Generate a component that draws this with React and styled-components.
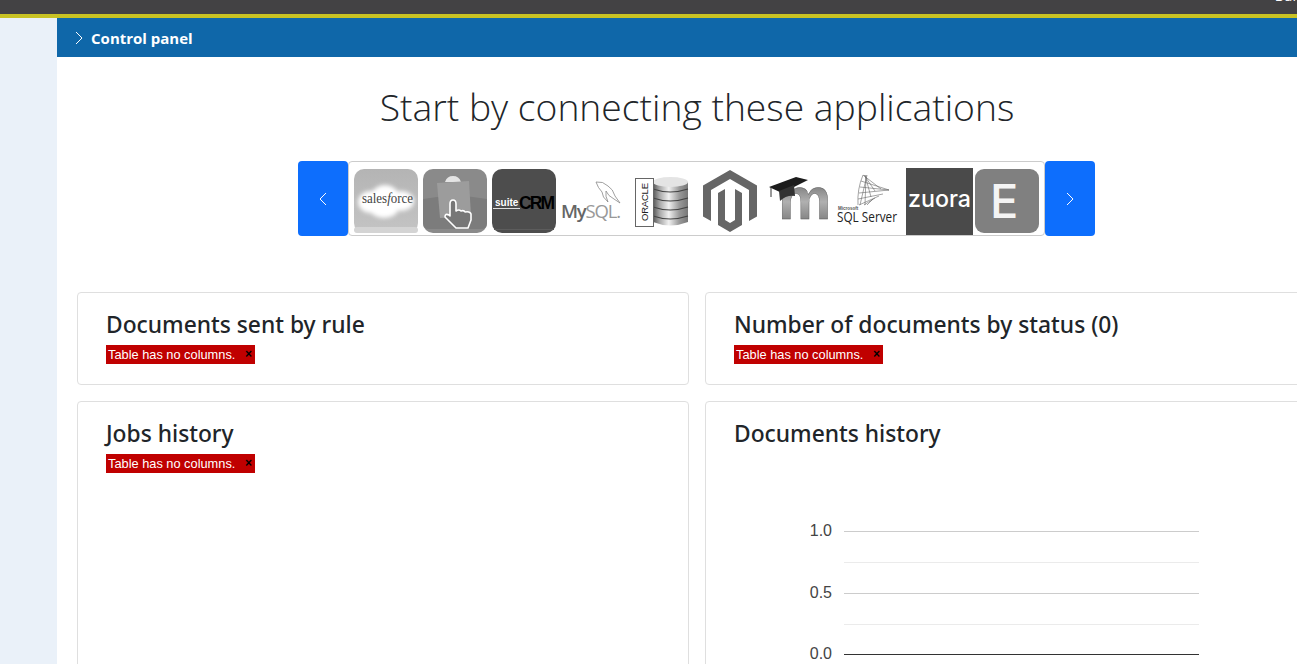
import styled, { createGlobalStyle } from 'styled-components';

const GlobalStyle = createGlobalStyle`
    html, body {
        margin: 0;
        height: 100%;
        overflow: hidden;
        background: #fff;
        font-family: "Open Sans", "Noto Sans", sans-serif;
        color: #212529;
    }
`;

const TopBar = styled.div`
    height: 14px;
    background: #434244;
    border-bottom: 4px solid #c8c224;
    overflow: hidden;
    display: flex;
    justify-content: flex-end;
`;

const UserName = styled.span`
    color: #fff;
    font-size: 14px;
    line-height: 14px;
    margin-top: -11px;
    margin-right: -4px;
    white-space: nowrap;
`;

const Shell = styled.div`
    display: flex;
    height: 646px;
    overflow: hidden;
`;

const Sidebar = styled.aside`
    flex: 0 0 57px;
    background: #eaf1f9;
`;

const Main = styled.main`
    flex: 0 0 1280px;
    background: #fff;
`;

const Breadcrumb = styled.div`
    height: 39px;
    background: #0f67a9;
    display: flex;
    align-items: center;
    padding-left: 16px;
    gap: 6px;
    color: #fff;
    font-size: 15px;
    font-weight: 700;
`;

const PageTitle = styled.h1`
    margin: 25px 0 0;
    height: 79px;
    text-align: center;
    font-size: 37.25px;
    line-height: 50px;
    font-weight: 300;
    color: #212529;
`;

const Carousel = styled.div`
    display: flex;
    justify-content: center;
    height: 75px;
    padding-right: 1px;
`;

const NavButton = styled.button`
    width: 50px;
    height: 75px;
    padding: 0;
    border: 0;
    background: #0d6efd;
    color: #fff;
    display: flex;
    align-items: center;
    justify-content: center;
    border-radius: 4px;
`;

const Track = styled.div`
    width: 697px;
    box-sizing: border-box;
    border: 1px solid #ccc;
    border-radius: 4px;
    padding: 5px 0 0 5px;
    display: flex;
    align-items: center;
    overflow: hidden;
`;

const Slide = styled.div`
    flex: 0 0 69px;
    height: 67px;
    display: flex;
    align-items: center;
`;

const CardGrid = styled.div`
    display: grid;
    grid-template-columns: 612px 612px;
    column-gap: 16px;
    row-gap: 16px;
    padding: 56px 0 0 20px;
`;

const Card = styled.section`
    box-sizing: border-box;
    height: ${(props) => (props.$tall ? '400px' : '93px')};
    border: 1px solid #dfdfdf;
    border-radius: 4px;
    padding: 16px 28px;
`;

const CardTitle = styled.h4`
    margin: 0;
    height: 36px;
    font-family: "Noto Sans", "Open Sans", sans-serif;
    font-size: 22.8px;
    line-height: 31px;
    font-weight: 500;
    color: #212529;
`;

const ChartError = styled.div`
    width: 149px;
    height: 19px;
    box-sizing: border-box;
    padding: 0 3px 0 2px;
    background: #c00000;
    color: #fff;
    font-family: "Liberation Sans", Arial, sans-serif;
    font-size: 12.8px;
    line-height: 19px;
    display: flex;
    justify-content: space-between;
`;

const ErrorClose = styled.span`
    color: #000;
    font-weight: 700;
    font-size: 12px;
`;

const ChartBox = styled.div`
    margin: 69px 0 0 -29px;
`;

function SalesforceLogo() {
    return (
        <svg width="64" height="64" viewBox="0 0 64 64">
            <defs>
                <linearGradient id="sfBg" x1="0" y1="0" x2="0" y2="1">
                    <stop offset="0" stopColor="#b4b4b4" />
                    <stop offset="1" stopColor="#c4c4c4" />
                </linearGradient>
                <filter id="sfBlur">
                    <feGaussianBlur stdDeviation="2" />
                </filter>
            </defs>
            <rect width="64" height="64" rx="10" fill="url(#sfBg)" />
            <g fill="#fff" filter="url(#sfBlur)">
                <ellipse cx="17" cy="33" rx="13" ry="11" />
                <ellipse cx="31" cy="26" rx="13" ry="10" />
                <ellipse cx="47" cy="32" rx="13" ry="10" />
                <ellipse cx="30" cy="40" rx="14" ry="9" />
            </g>
            <text x="8" y="34" fontFamily="Liberation Serif, serif" fontSize="15" fill="#444" textLength="51" lengthAdjust="spacingAndGlyphs">
                sales<tspan fontStyle="italic">f</tspan>orce
            </text>
            <rect y="58" width="64" height="6" rx="3" fill="#d4d4d4" />
        </svg>
    );
}

function ShopLogo() {
    return (
        <svg width="64" height="64" viewBox="0 0 64 64">
            <rect width="64" height="64" rx="10" fill="#8a8a8a" />
            <path d="M0 30 Q32 24 64 30 V54 Q64 60 58 60 H6 Q0 60 0 54Z" fill="#7c7c7c" />
            <path d="M22 13 A8.5 9 0 0 1 38 13Z" fill="#e4e4e4" />
            <path d="M14 14 L46 12 L48 47 L17 49Z" fill="#9c9c9c" />
            <path
                d="M27 35 Q27 31 30 31 Q33 31 33 35 V42 Q36 40 38 42 Q41 41 42 43 Q47 42 48 45 L48 51 L45 59 H33 L22 48 Q22 44 26 46 L27 47Z"
                fill="#777"
                stroke="#fff"
                strokeWidth="1.6"
                strokeLinejoin="round"
            />
        </svg>
    );
}

function SuiteLogo() {
    return (
        <svg width="64" height="64" viewBox="0 0 64 64">
            <rect width="64" height="64" rx="10" fill="#4d4d4d" />
            <rect x="2" y="60" width="60" height="1" fill="#5c5c5c" />
            <text x="3" y="37" fontFamily="Liberation Sans, sans-serif" fontSize="10" fontWeight="700" fill="#fff">
                suite
            </text>
            <rect x="1" y="39" width="27" height="1" fill="#ddd" />
            <text x="27" y="40" fontFamily="Liberation Sans, sans-serif" fontSize="17.5" fontWeight="700" fill="#000" textLength="36">
                CRM
            </text>
        </svg>
    );
}

function MysqlLogo() {
    return (
        <svg width="64" height="64" viewBox="0 0 64 64">
            <path
                d="M35 13 Q42 12 47 17 Q52 20 54 27 L59 34 L53 30 Q47 27 45 22 Q44 27 47 33 Q41 28 41 23 Q37 19 35 13Z"
                fill="none"
                stroke="#888"
                strokeWidth="0.8"
            />
            <text x="0" y="49" fontFamily="Open Sans, sans-serif" fontSize="18.5" fontWeight="600" textLength="60">
                <tspan fill="#666">My</tspan>
                <tspan fill="#999" fontWeight="400">SQL.</tspan>
            </text>
        </svg>
    );
}

function OracleLogo() {
    const bands = [20, 29, 38, 47];
    return (
        <svg width="64" height="64" viewBox="0 0 64 64">
            <defs>
                <linearGradient id="oraDb" x1="0" y1="0" x2="1" y2="0">
                    <stop offset="0" stopColor="#555" />
                    <stop offset="0.2" stopColor="#aaa" />
                    <stop offset="0.45" stopColor="#f0f0f0" />
                    <stop offset="0.75" stopColor="#999" />
                    <stop offset="1" stopColor="#777" />
                </linearGradient>
            </defs>
            <path d="M23 13 Q40 6 58 13 V53 Q40 60 23 53Z" fill="url(#oraDb)" />
            <ellipse cx="40.5" cy="13" rx="17.5" ry="5" fill="#e4e4e4" />
            {bands.map((y) => (
                <path key={y} d={`M23 ${y} Q40 ${y + 6} 58 ${y}`} fill="none" stroke="#444" strokeWidth="1.2" />
            ))}
            <rect x="5.5" y="9.5" width="18" height="48" fill="#fff" stroke="#666" />
            <text
                transform="translate(18 52) rotate(-90)"
                fontFamily="Liberation Sans, sans-serif"
                fontSize="9.5"
                fontWeight="400"
                fill="#222"
                textLength="38"
            >
                ORACLE
            </text>
        </svg>
    );
}

function MagentoLogo() {
    return (
        <svg width="64" height="64" viewBox="0 0 64 64">
            <path d="M31 1 L58 16.5 V47.5 L50 52 V21 L31 10 L12 21 V52 L4 47.5 V16.5Z" fill="#666" />
            <path d="M31 63 L19 56 V24 L26 20 V51 L31 54 L36 51 V20 L43 24 V56Z" fill="#666" />
        </svg>
    );
}

function MoodleLogo() {
    return (
        <svg width="64" height="64" viewBox="0 0 64 64">
            <defs>
                <linearGradient id="moodleM" x1="0" y1="0" x2="0" y2="1">
                    <stop offset="0" stopColor="#444" />
                    <stop offset="0.55" stopColor="#b0b0b0" />
                    <stop offset="1" stopColor="#666" />
                </linearGradient>
            </defs>
            <text x="10" y="50" fontFamily="Liberation Sans, sans-serif" fontSize="60" fontWeight="700" fill="url(#moodleM)" stroke="#555" strokeWidth="0.4" textLength="53">
                m
            </text>
            <path d="M1 18 L28 8 L40 11 L14 24Z" fill="#1c1c1c" />
            <path d="M11 22 L12 32 Q18 26 27 27 L26 16Z" fill="#333" />
            <path d="M3 18 V28" stroke="#333" strokeWidth="1" />
        </svg>
    );
}

function SqlServerLogo() {
    const strands = [
        'M26 6 L44 20',
        'M27 6 L38 22',
        'M28 6 L34 28',
        'M29 6 L28 36',
        'M30 6 L23 36',
        'M24 12 L52 21',
        'M23 18 L52 21',
        'M22 24 L52 21',
        'M21 30 L46 25',
        'M22 36 L42 27',
        'M27 36 L38 29',
        'M30 36 L36 30',
        'M26 6 Q20 20 21 36',
    ];
    return (
        <svg width="64" height="64" viewBox="0 0 64 64">
            <g fill="none" stroke="#666" strokeWidth="0.6">
                {strands.map((d) => (
                    <path key={d} d={d} />
                ))}
            </g>
            <text x="1" y="41" fontFamily="Liberation Sans, sans-serif" fontSize="4.5" fontWeight="700" fill="#555">
                Microsoft
            </text>
            <text x="0" y="53" fontFamily="Open Sans, sans-serif" fontSize="14" fill="#222" textLength="60" lengthAdjust="spacingAndGlyphs">
                SQL Server
            </text>
        </svg>
    );
}

function ZuoraLogo() {
    return (
        <svg width="67" height="67" viewBox="0 0 67 67">
            <rect width="67" height="67" fill="#4a4a4a" />
            <text x="2" y="39" fontFamily="Inter, sans-serif" fontSize="23" fontWeight="500" fill="#fff" textLength="63" lengthAdjust="spacingAndGlyphs">
                zuora
            </text>
        </svg>
    );
}

function ElementLogo() {
    return (
        <svg width="64" height="64" viewBox="0 0 64 64">
            <rect width="64" height="64" rx="9" fill="#808080" />
            <text x="15" y="49" fontFamily="Inter, sans-serif" fontSize="47" fontWeight="500" fill="#f4f4f4">
                E
            </text>
        </svg>
    );
}

function Chevron({ direction = 'right', size = 14, color = '#fff' }) {
    const d = direction === 'left' ? 'M9 1 L3 7 L9 13' : 'M3 1 L9 7 L3 13';
    return (
        <svg width={size * 0.86} height={size} viewBox="0 0 12 14">
            <path d={d} fill="none" stroke={color} strokeWidth="1" />
        </svg>
    );
}

function HistoryChart() {
    const lines = [
        { y: 8, color: '#ccc' },
        { y: 39, color: '#ebebeb' },
        { y: 70, color: '#ccc' },
        { y: 101, color: '#ebebeb' },
        { y: 131, color: '#333' },
    ];
    const labels = [
        { y: 12.5, text: '1.0' },
        { y: 74.5, text: '0.5' },
        { y: 135.5, text: '0.0' },
    ];
    return (
        <svg width="610" height="180" viewBox="0 0 610 180">
            {lines.map((line) => (
                <rect key={line.y} x="139" y={line.y} width="355" height="1" fill={line.color} />
            ))}
            {labels.map((label) => (
                <text
                    key={label.text}
                    x="127"
                    y={label.y}
                    textAnchor="end"
                    fontFamily="Liberation Sans, Arial, sans-serif"
                    fontSize="16"
                    fill="#444"
                >
                    {label.text}
                </text>
            ))}
        </svg>
    );
}

function ErrorBar() {
    return (
        <ChartError>
            Table has no columns.
            <ErrorClose>×</ErrorClose>
        </ChartError>
    );
}

const logos = [
    SalesforceLogo,
    ShopLogo,
    SuiteLogo,
    MysqlLogo,
    OracleLogo,
    MagentoLogo,
    MoodleLogo,
    SqlServerLogo,
    ZuoraLogo,
    ElementLogo,
];

export default function App() {
    return (
        <>
            <GlobalStyle />
            <TopBar>
                <UserName>Bun</UserName>
            </TopBar>
            <Shell>
                <Sidebar />
                <Main>
                    <Breadcrumb>
                        <Chevron size={14} />
                        Control panel
                    </Breadcrumb>
                    <PageTitle>Start by connecting these applications</PageTitle>
                    <Carousel>
                        <NavButton aria-label="Previous">
                            <Chevron direction="left" />
                        </NavButton>
                        <Track>
                            {logos.map((Logo) => (
                                <Slide key={Logo.name}>
                                    <Logo />
                                </Slide>
                            ))}
                        </Track>
                        <NavButton aria-label="Next">
                            <Chevron />
                        </NavButton>
                    </Carousel>
                    <CardGrid>
                        <Card>
                            <CardTitle>Documents sent by rule</CardTitle>
                            <ErrorBar />
                        </Card>
                        <Card>
                            <CardTitle>Number of documents by status (0)</CardTitle>
                            <ErrorBar />
                        </Card>
                        <Card $tall>
                            <CardTitle>Jobs history</CardTitle>
                            <ErrorBar />
                        </Card>
                        <Card $tall>
                            <CardTitle>Documents history</CardTitle>
                            <ChartBox>
                                <HistoryChart />
                            </ChartBox>
                        </Card>
                    </CardGrid>
                </Main>
            </Shell>
        </>
    );
}
